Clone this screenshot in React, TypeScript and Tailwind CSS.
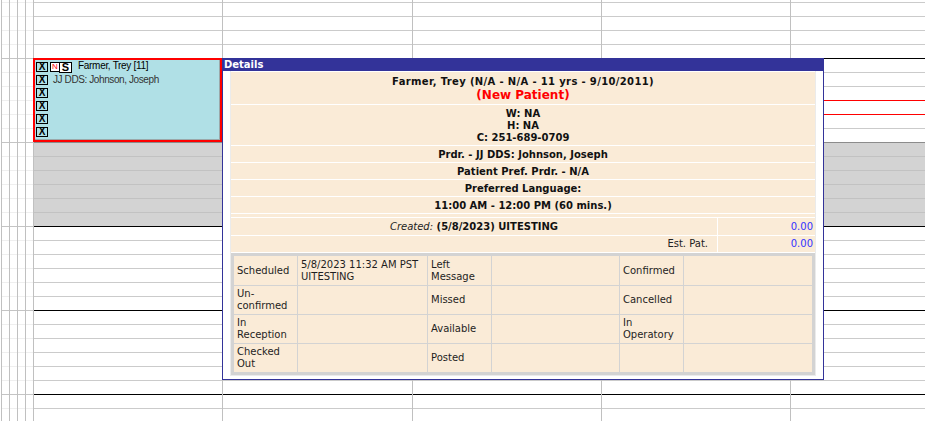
import React from "react";

// row k (1-based) ends with its bottom line at y = 2 + 14k
const ROWS = Array.from({ length: 30 }, (_, i) => i + 1);
const HOUR_ROWS = [4, 16, 22, 28];
const BLOCK_TOP = 10;
const BLOCK_ROWS = [11, 12, 13, 14, 15, 16];

function mainRowClass(k: number, red: boolean) {
  if (red && (k === 7 || k === 8)) return "h-[14px] shrink-0 border-b border-[#ff0000]";
  if (k === 16) return "h-[14px] shrink-0 border-b border-black bg-[#d3d3d3]";
  if (HOUR_ROWS.includes(k)) return "h-[14px] shrink-0 border-b border-black";
  if (k === BLOCK_TOP) return "h-[14px] shrink-0 border-b border-[#8c8c8c]";
  if (BLOCK_ROWS.includes(k)) return "h-[14px] shrink-0 border-b border-[#c2c2c2] bg-[#d3d3d3]";
  return "h-[14px] shrink-0 border-b border-[#cbcbcb]";
}

function narrowRowClass(k: number) {
  if (HOUR_ROWS.includes(k) || k === BLOCK_TOP) return "h-[14px] shrink-0 border-b border-[#c4c4c4]";
  return "h-[14px] shrink-0 border-b border-[#efefef]";
}

function NarrowColumn() {
  return (
    <div className="w-[8px] shrink-0 border-l border-[#c0c0c0] flex flex-col">
      <div className="h-[3px] shrink-0 border-b border-[#efefef]" />
      {ROWS.map((k) => (
        <div key={k} className={narrowRowClass(k)} />
      ))}
    </div>
  );
}

function MainColumn({ width, red = false }: { width: string; red?: boolean }) {
  return (
    <div className={`${width} shrink-0 border-l border-[#c0c0c0] flex flex-col`}>
      <div className="h-[3px] shrink-0 border-b border-[#cbcbcb]" />
      {ROWS.map((k) => (
        <div key={k} className={mainRowClass(k, red)} />
      ))}
    </div>
  );
}

function XBox() {
  return (
    <div className="w-[12px] h-[10px] mb-[3px] border border-black flex items-center justify-center text-[10px] font-bold leading-none text-black">
      X
    </div>
  );
}

function Appointment() {
  return (
    <div className="absolute left-[33px] top-[58px] w-[189px] h-[84px] border-2 border-[#ff0000]">
      <div className="h-full bg-[#b0e0e6] border-r border-b border-[#9aa8aa] flex pl-[1px] pt-[2px] font-['Liberation_Sans',Arial,sans-serif]">
        <div className="flex flex-col">
          {[0, 1, 2, 3, 4, 5].map((i) => (
            <XBox key={i} />
          ))}
        </div>
        <div className="ml-[2px] flex flex-col">
          <div className="flex items-start">
            <div className="w-[10px] h-[10px] bg-white border border-black flex items-center justify-center text-[8px] leading-none text-[#ff0000]">
              N
            </div>
            <div className="w-[13px] h-[11px] -ml-[1px] bg-white border border-black flex items-center justify-center text-[11px] font-bold leading-none text-black">
              S
            </div>
            <span className="ml-[6px] -mt-[1px] text-[10px] leading-[10px] tracking-[-0.3px] text-black">
              Farmer, Trey [11]
            </span>
          </div>
          <div className="ml-[3px] text-[10px] leading-[14px] tracking-[-0.4px] text-[#333]">
            JJ DDS: Johnson, Joseph
          </div>
        </div>
      </div>
    </div>
  );
}

function Cell({ children, h, className = "" }: { children?: React.ReactNode; h: string; className?: string }) {
  return <div className={`${h} bg-[#faebd7] ${className}`}>{children}</div>;
}

const statusRows: string[][] = [
  ["Scheduled", "5/8/2023 11:32 AM PST UITESTING", "Left Message", "", "Confirmed", ""],
  ["Un-confirmed", "", "Missed", "", "Cancelled", ""],
  ["In Reception", "", "Available", "", "In Operatory", ""],
  ["Checked Out", "", "Posted", "", "", ""],
];

function StatusTable() {
  return (
    <div className="grid grid-cols-[63px_129px_63px_127px_63px_128px] grid-rows-[29px_28px_28px_28px] gap-[1px] p-[3px] bg-[#d3d3d3]">
      {statusRows.flat().map((text, i) => (
        <div key={i} className="bg-[#faebd7] flex items-center pl-[3px] pr-[2px] text-[10px] leading-[12px] text-[#1e1e1e]">
          <span>{text}</span>
        </div>
      ))}
    </div>
  );
}

function Popup() {
  return (
    <div className="absolute left-[222px] top-[58px] w-[602px] h-[322px] bg-white border-x border-b border-[#333399] font-['DejaVu_Sans',Verdana,sans-serif] text-[#111]">
      <div className="h-[13px] bg-[#333399] pl-[1px] text-[10px] font-bold leading-[13px] text-white">Details</div>
      <div className="pl-[7px] pr-[7px]">
        <div className="border-x border-b border-[#ebebeb] pt-[1px] flex flex-col gap-[1px] font-bold">
          <Cell h="h-[32px]" className="flex flex-col items-center pt-[4px]">
            <div className="text-[10px] leading-[12px] tracking-[0.35px]">Farmer, Trey (N/A - N/A - 11 yrs - 9/10/2011)</div>
            <div className="text-[12px] leading-[14px] text-[#ff0000]">(New Patient)</div>
          </Cell>
          <Cell h="h-[40px]" className="flex flex-col items-center pt-[3px] text-[10px] leading-[12px]">
            <div>W: NA</div>
            <div>H: NA</div>
            <div>C: 251-689-0709</div>
          </Cell>
          <Cell h="h-[16px]" className="text-center pt-[3px] text-[10px] leading-[12px]">
            Prdr. - JJ DDS: Johnson, Joseph
          </Cell>
          <Cell h="h-[16px]" className="text-center pt-[3px] text-[10px] leading-[12px]">
            Patient Pref. Prdr. - N/A
          </Cell>
          <Cell h="h-[16px]" className="text-center pt-[3px] text-[10px] leading-[12px]">
            Preferred Language:
          </Cell>
          <Cell h="h-[16px]" className="text-center pt-[3px] text-[10px] leading-[12px]">
            11:00 AM - 12:00 PM (60 mins.)
          </Cell>
          <Cell h="h-[3px]" />
          <div className="flex gap-[1px] text-[10px] leading-[12px]">
            <div className="w-[486px] h-[17px] bg-[#faebd7] text-center pt-[3px]">
              <span className="italic font-normal text-[#222]">Created:</span> (5/8/2023) UITESTING
            </div>
            <div className="w-[97px] h-[17px] bg-[#faebd7] text-right pr-[2px] pt-[3px] font-normal text-[#3333ff]">0.00</div>
          </div>
          <div className="flex gap-[1px] text-[10px] leading-[12px] font-normal">
            <div className="w-[486px] h-[16px] bg-[#faebd7] text-right pr-[9px] pt-[2px] text-[#222]">Est. Pat.</div>
            <div className="w-[97px] h-[16px] bg-[#faebd7] text-right pr-[2px] pt-[2px] text-[#3333ff]">0.00</div>
          </div>
          <div className="font-normal">
            <StatusTable />
          </div>
        </div>
      </div>
    </div>
  );
}

export default function App() {
  return (
    <div className="relative w-[925px] h-[421px] overflow-hidden bg-white">
      <div className="flex h-full pl-[1px]">
        <NarrowColumn />
        <NarrowColumn />
        <NarrowColumn />
        <NarrowColumn />
        <MainColumn width="w-[189px]" />
        <MainColumn width="w-[190px]" />
        <MainColumn width="w-[189px]" />
        <MainColumn width="w-[189px]" />
        <MainColumn width="w-[200px]" red />
      </div>
      <Appointment />
      <Popup />
    </div>
  );
}
